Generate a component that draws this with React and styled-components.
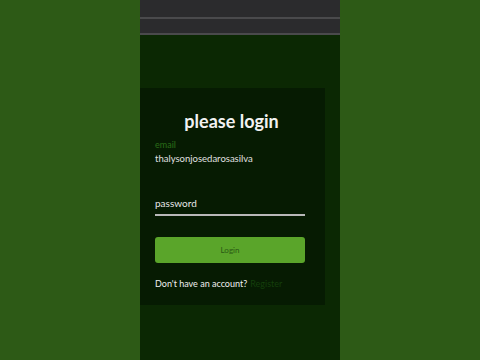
import React from 'react';
import styled, { createGlobalStyle } from 'styled-components';

const GlobalStyle = createGlobalStyle`
  html, body {
    margin: 0;
    padding: 0;
  }
  body {
    font-family: 'Lato', 'Open Sans', sans-serif;
  }
`;

const Page = styled.div`
  width: 480px;
  height: 360px;
  background-color: #2d5a16;
  display: flex;
  justify-content: center;
  overflow: hidden;
`;

const Phone = styled.div`
  width: 200px;
  height: 100%;
  background-color: #0b2803;
  display: flex;
  flex-direction: column;
`;

const TopBar = styled.div`
  height: ${({ h }) => h}px;
  background-color: #2b2b2d;
  border-bottom: 2px solid #4a4a4c;
  flex-shrink: 0;
`;

const Card = styled.div`
  margin-top: 53px;
  width: 185px;
  height: 217px;
  background-color: #061b02;
  box-sizing: border-box;
  padding: 20px 20px 0 15px;
  display: flex;
  flex-direction: column;
`;

const Title = styled.h1`
  margin: 0;
  font-size: 18px;
  font-weight: 700;
  color: #f2f2f2;
  text-align: center;
  line-height: 26px;
  padding-left: 3px;
`;

const Field = styled.div`
  display: flex;
  flex-direction: column;
  margin-top: ${({ top }) => top}px;
`;

const Label = styled.span`
  font-size: ${({ active }) => (active ? 9 : 10)}px;
  color: ${({ active }) => (active ? '#2a6e18' : '#e8e8e8')};
  line-height: 12px;
`;

const Value = styled.div`
  font-size: 9.5px;
  color: #e0e0e0;
  line-height: 14px;
  margin-top: 1px;
`;

const Underline = styled.div`
  height: 2px;
  background-color: #b8b8b8;
  margin-top: 5px;
  width: 150px;
`;

const Button = styled.button`
  margin-top: 21px;
  width: 150px;
  height: 26px;
  border: none;
  border-radius: 3px;
  background-color: #5aa52a;
  color: #2a5a14;
  font-family: inherit;
  font-size: 8px;
  padding: 0;
`;

const Footer = styled.p`
  margin: 15px 0 0;
  font-size: 9px;
  color: #f0f0f0;
  a {
    color: #143f0b;
    text-decoration: none;
    margin-left: 3px;
  }
`;

export default function App() {
  return (
    <Page>
      <GlobalStyle />
      <Phone>
        <TopBar h={17} />
        <TopBar h={14} />
        <Card>
          <Title>please login</Title>
          <Field top={5}>
            <Label active>email</Label>
            <Value>thalysonjosedarosasilva</Value>
          </Field>
          <Field top={31}>
            <Label>password</Label>
            <Underline />
          </Field>
          <Button>Login</Button>
          <Footer>
            Don't have an account?<a href="#">Register</a>
          </Footer>
        </Card>
      </Phone>
    </Page>
  );
}
